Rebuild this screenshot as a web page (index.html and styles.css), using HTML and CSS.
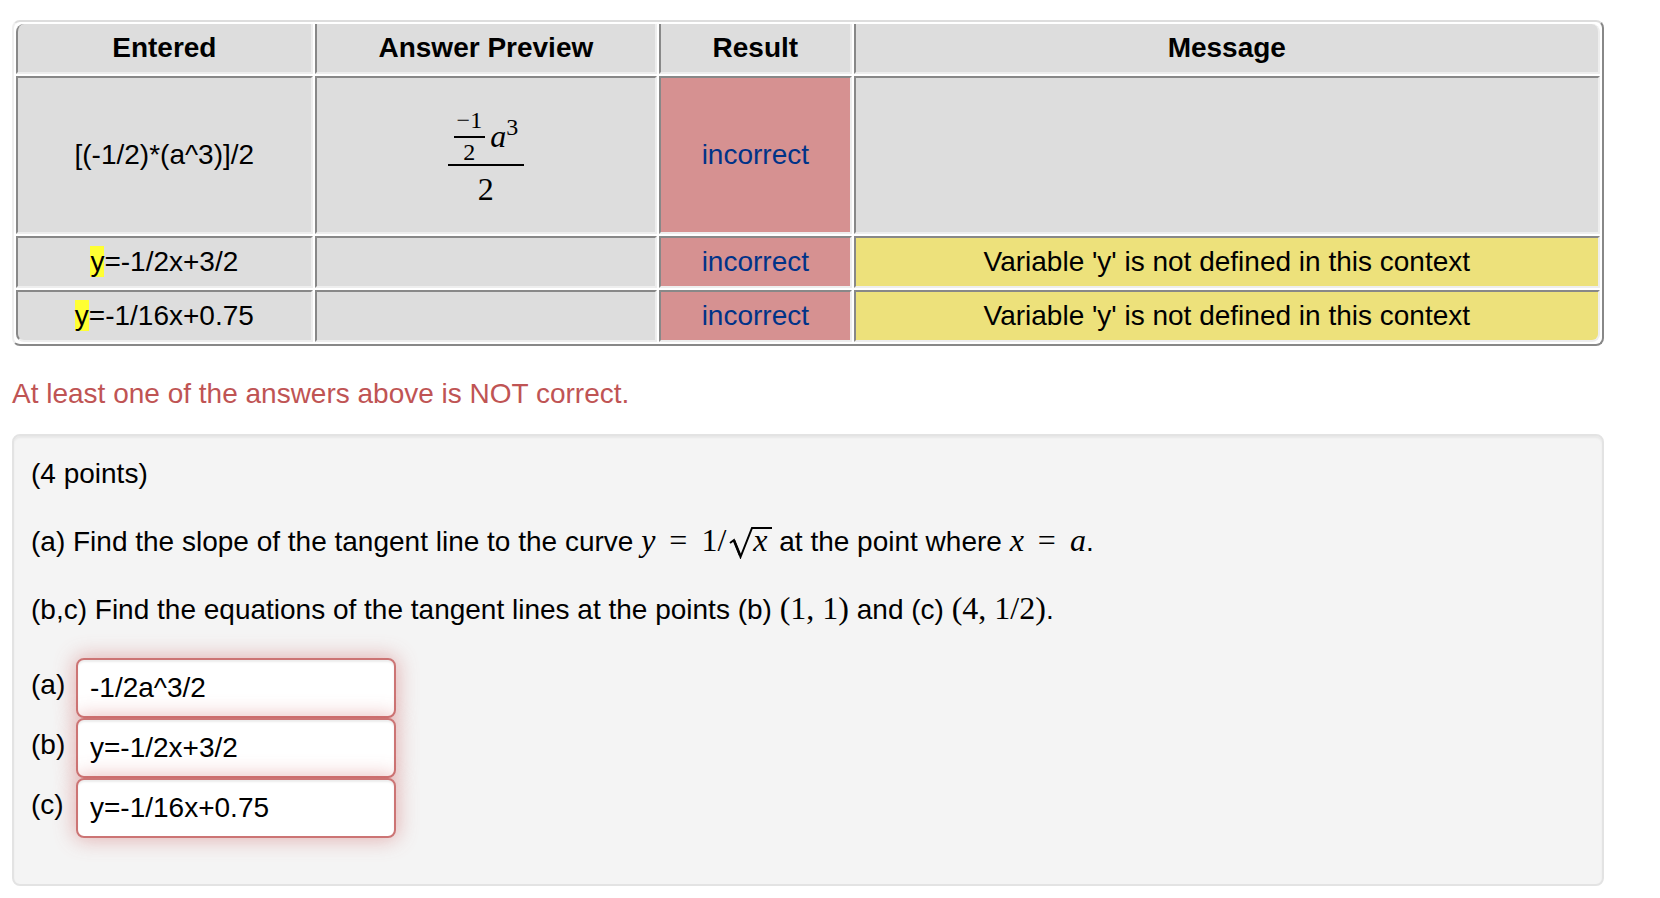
FILE: index.html
```
<!DOCTYPE html>
<html lang="en">
<head>
<meta charset="utf-8">
<title>Tangent lines</title>
<link rel="stylesheet" href="styles.css">
</head>
<body>
<main class="page">
  <table class="results">
    <colgroup>
      <col class="col-entered">
      <col class="col-preview">
      <col class="col-result">
      <col class="col-message">
    </colgroup>
    <thead>
      <tr><th scope="col">Entered</th><th scope="col">Answer Preview</th><th scope="col">Result</th><th scope="col">Message</th></tr>
    </thead>
    <tbody>
      <tr>
        <td>[(-1/2)*(a^3)]/2</td>
        <td>
          <div class="preview math">
            <div class="frac">
              <div class="numerator">
                <div class="frac-small"><span class="small-top">−1</span><span class="small-bottom">2</span></div>
                <div><i>a</i><sup>3</sup></div>
              </div>
              <div class="denominator">2</div>
            </div>
          </div>
        </td>
        <td class="incorrect"><a href="#answer-a">incorrect</a></td>
        <td></td>
      </tr>
      <tr>
        <td><mark>y</mark>=-1/2x+3/2</td>
        <td></td>
        <td class="incorrect"><a href="#answer-b">incorrect</a></td>
        <td class="warning">Variable 'y' is not defined in this context</td>
      </tr>
      <tr>
        <td><mark>y</mark>=-1/16x+0.75</td>
        <td></td>
        <td class="incorrect"><a href="#answer-c">incorrect</a></td>
        <td class="warning">Variable 'y' is not defined in this context</td>
      </tr>
    </tbody>
  </table>

  <p class="summary">At least one of the answers above is NOT correct.</p>

  <form class="problem">
    <p>(4 points)</p>
    <p>(a) Find the slope of the tangent line to the curve <span class="math"><i>y</i><span class="rel">=</span>1/<span class="sqrt"><svg class="surd" viewBox="0 0 24 32" aria-hidden="true"><path d="M1 16 L5 13 L11.5 30 L23 1 H24" fill="none" stroke="#000" stroke-width="2"/><path d="M5 13.5 L11 28" stroke="#000" stroke-width="2.6"/></svg><i class="radicand">x</i></span></span> at the point where <span class="math"><i>x</i><span class="rel">=</span><i>a</i></span>.</p>
    <p>(b,c) Find the equations of the tangent lines at the points (b) <span class="math">(1<span class="comma">,</span>1)</span> and (c) <span class="math">(4<span class="comma">,</span>1/2)</span>.</p>
    <div class="answers">
      <div class="answer"><label for="answer-a">(a)</label><input id="answer-a" type="text" value="-1/2a^3/2"></div>
      <div class="answer"><label for="answer-b">(b)</label><input id="answer-b" type="text" value="y=-1/2x+3/2"></div>
      <div class="answer"><label for="answer-c">(c)</label><input id="answer-c" type="text" value="y=-1/16x+0.75"></div>
    </div>
  </form>
</main>
</body>
</html>
```
FILE: styles.css
```
* { box-sizing: border-box; }

body {
  margin: 0;
  background: #fff;
  color: #000;
  font: 28px/40px "Liberation Sans", Arial, sans-serif;
}

.page { padding: 20px 56px 8px 12px; }

p { margin: 0; }

/* Results table */
.results {
  width: 100%;
  table-layout: fixed;
  border: 2px solid;
  border-color: #ddd #888 #888 #eee;
  border-radius: 8px;
  border-collapse: separate;
  border-spacing: 2px;
  text-align: center;
}

.col-entered { width: 18.8%; }
.col-preview { width: 21.7%; }
.col-result { width: 12.2%; }

.results th,
.results td {
  padding: 4px;
  background: #ddd;
  border: 2px solid;
  border-color: #888 #eee #eee #888;
  vertical-align: middle;
}

.results th { border-top: 0; }
.results th:first-child { border-top-left-radius: 8px; }
.results th:last-child { border-top-right-radius: 8px; }
.results tbody tr:last-child td:first-child { border-bottom-left-radius: 8px; }
.results tbody tr:last-child td:last-child { border-bottom-right-radius: 8px; }

.results .incorrect { background: #d69191; }
.results .warning { background: #ede17b; }

.incorrect a { color: #038; text-decoration: none; }

mark { background: #ff3; color: inherit; }

/* Math */
.math {
  font-family: "Liberation Serif", "Times New Roman", serif;
  font-size: 32px;
  line-height: 36px;
}

.preview {
  display: flex;
  justify-content: center;
  padding: 26px 0 21px;
}

.numerator {
  display: flex;
  align-items: center;
  gap: 5px;
  padding: 0 6px;
  border-bottom: 2px solid #000;
}

.denominator { padding-top: 5px; }

.frac-small {
  display: flex;
  flex-direction: column;
  font-size: 24px;
  line-height: 24px;
}

.small-top { padding: 0 3px 4px; border-bottom: 2px solid #000; }
.small-bottom { padding-top: 2px; }

sup { font-size: 24px; line-height: 0; vertical-align: 12px; }

.rel { margin: 0 14px; }
.comma { margin-right: 8px; }

.problem .math { line-height: 32px; }
.sqrt { margin-left: 3px; white-space: nowrap; }
.surd { width: 24px; height: 32px; vertical-align: -8px; }
.radicand {
  display: inline-block;
  padding-right: 4px;
  border-top: 2px solid #000;
  line-height: 22px;
}

/* Problem */
.summary { margin: 28px 0 20px; color: #bf5454; }

.problem {
  padding: 18px 17px 46px;
  background: #f4f4f4;
  border: 2px solid #e3e3e3;
  border-radius: 8px;
  box-shadow: inset 0 2px 2px rgba(0, 0, 0, .05);
}

.problem p { margin-bottom: 28px; }

.answer { display: flex; align-items: center; }

.answer label { width: 45px; padding-bottom: 6px; }

.answer input {
  width: 320px;
  height: 60px;
  padding: 8px 12px;
  background: #fff;
  border: 2px solid #cc7474;
  border-radius: 8px;
  box-shadow: inset 0 2px 2px rgba(0, 0, 0, .075), 0 0 20px 2px rgba(206, 90, 90, .42);
  color: #000;
  font: inherit;
  outline: 0;
}
```
